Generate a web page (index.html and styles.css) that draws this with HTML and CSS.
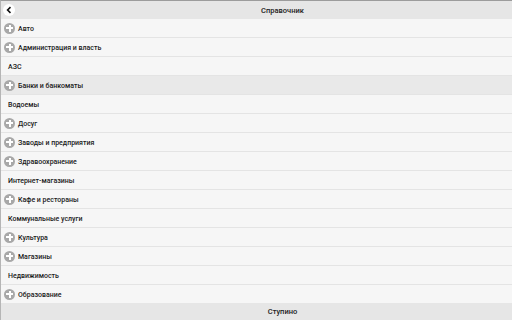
FILE: index.html
```html
<!DOCTYPE html>
<html lang="ru">
<head>
<meta charset="utf-8">
<link rel="stylesheet" href="styles.css">
</head>
<body>
<div class="app">
  <header class="bar top">
    <span class="back"><svg width="8" height="8" viewBox="0 0 8 8"><path d="M5.5 1.2 L2.6 4 L5.5 6.8" fill="none" stroke="#111" stroke-width="1.6"/></svg></span>
    <span class="title">Справочник</span>
  </header>
  <ul class="list">
    <li class="row"><span class="plus"></span>Авто</li>
    <li class="row"><span class="plus"></span>Администрация и власть</li>
    <li class="row flat">АЗС</li>
    <li class="row sel"><span class="plus"></span>Банки и банкоматы</li>
    <li class="row flat">Водоемы</li>
    <li class="row"><span class="plus"></span>Досуг</li>
    <li class="row"><span class="plus"></span>Заводы и предприятия</li>
    <li class="row"><span class="plus"></span>Здравоохранение</li>
    <li class="row flat">Интернет-магазины</li>
    <li class="row"><span class="plus"></span>Кафе и рестораны</li>
    <li class="row flat">Коммунальные услуги</li>
    <li class="row"><span class="plus"></span>Культура</li>
    <li class="row"><span class="plus"></span>Магазины</li>
    <li class="row flat">Недвижимость</li>
    <li class="row"><span class="plus"></span>Образование</li>
  </ul>
  <footer class="bar bottom"><span class="title">Ступино</span></footer>
</div>
</body>
</html>
```
FILE: styles.css
```css
* { box-sizing: border-box; }
html, body { margin: 0; padding: 0; }
body {
  font-family: Roboto, "Noto Sans", sans-serif;
  color: #1a1a1a;
  background: #f6f6f6;
}
.app {
  width: 512px;
  height: 320px;
  display: flex;
  flex-direction: column;
  border-top: 1px solid #9c9c9c;
  border-left: 1px solid #b5b5b5;
  overflow: hidden;
}
.bar {
  background: #e6e6e6;
  display: flex;
  align-items: center;
  justify-content: center;
  padding-left: 52px;
  position: relative;
  flex: none;
}
.top { height: 18px; }
.bottom { height: 17px; margin-top: auto; }
.title { font-size: 7.5px; font-weight: 500; color: #222; }
.back {
  position: absolute;
  left: 2px;
  top: 3px;
  width: 12px;
  height: 12px;
  border-radius: 50%;
  background: #fff;
  display: flex;
  align-items: center;
  justify-content: center;
}
.list {
  list-style: none;
  margin: 0;
  padding: 0;
  flex: 1;
  overflow: hidden;
}
.row {
  height: 19px;
  display: flex;
  align-items: center;
  gap: 3px;
  padding-left: 3px;
  padding-top: 1px;
  font-size: 7px;
  font-weight: 500;
  background: #f6f6f6;
  border-bottom: 1px solid #e4e4e4;
}
.row.flat { padding-left: 7px; }
.row.sel { background: #e9e9e9; }
.plus {
  width: 11px;
  height: 11px;
  border-radius: 50%;
  background: #a8a8a8;
  position: relative;
  flex: none;
  margin-top: -1px;
}
.plus::before, .plus::after {
  content: "";
  position: absolute;
  background: #fff;
}
.plus::before { left: 2px; right: 2px; top: 4.5px; height: 2px; }
.plus::after { top: 2px; bottom: 2px; left: 4.5px; width: 2px; }
```
